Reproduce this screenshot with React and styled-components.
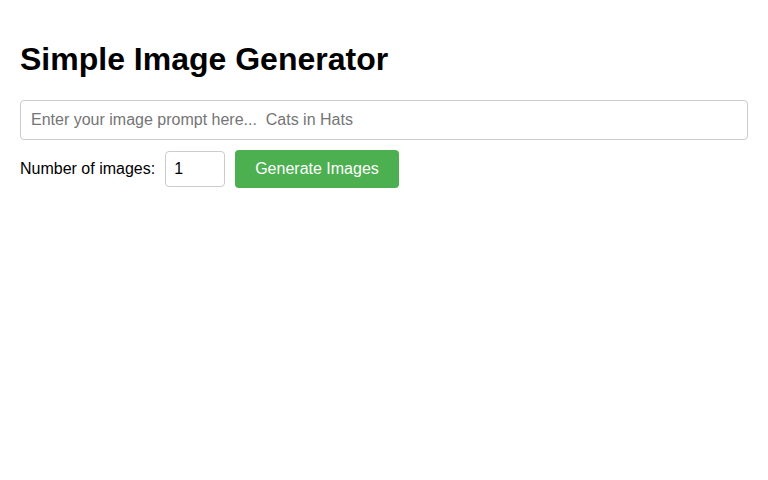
import React, { useState } from "react"
import { styled, createGlobalStyle } from "styled-components"

const GlobalStyle = createGlobalStyle`
  body {
    margin: 0;
    background: #fff;
    font-family: "Liberation Sans", Arial, sans-serif;
  }
`

export default function App() {
  const [prompt, setPrompt] = useState("")
  const [count, setCount] = useState(1)

  return (
    <Container>
      <GlobalStyle />
      <Title>Simple Image Generator</Title>
      <PromptInput
        type="text"
        value={prompt}
        onChange={(e) => setPrompt(e.target.value)}
        placeholder="Enter your image prompt here...  Cats in Hats"
      />
      <Controls>
        <Label htmlFor="count">Number of images:</Label>
        <CountInput
          id="count"
          type="number"
          min="1"
          value={count}
          onChange={(e) => setCount(e.target.value)}
        />
        <GenerateButton>Generate Images</GenerateButton>
      </Controls>
    </Container>
  )
}

const Container = styled.main`
  padding: 20px;
`

const Title = styled.h1`
  margin: 21px 0 22px;
  font-size: 32px;
  font-weight: 700;
  color: #000;
`

const PromptInput = styled.input`
  display: block;
  width: 100%;
  box-sizing: border-box;
  padding: 10px;
  font-family: inherit;
  font-size: 16px;
  border: 1px solid #ccc;
  border-radius: 4px;
  outline: none;

  &::placeholder {
    color: #757575;
  }
`

const Controls = styled.div`
  display: flex;
  align-items: center;
  gap: 10px;
  margin-top: 10px;
`

const Label = styled.label`
  font-size: 16px;
  color: #000;
`

const CountInput = styled.input`
  width: 60px;
  box-sizing: border-box;
  padding: 8px;
  font-family: inherit;
  font-size: 16px;
  border: 1px solid #ccc;
  border-radius: 4px;
  outline: none;
  -moz-appearance: textfield;

  &::-webkit-inner-spin-button,
  &::-webkit-outer-spin-button {
    -webkit-appearance: none;
    margin: 0;
  }
`

const GenerateButton = styled.button`
  padding: 10px 20px;
  font-family: inherit;
  font-size: 16px;
  color: #fff;
  background: #4caf50;
  border: none;
  border-radius: 4px;
  cursor: pointer;
`
